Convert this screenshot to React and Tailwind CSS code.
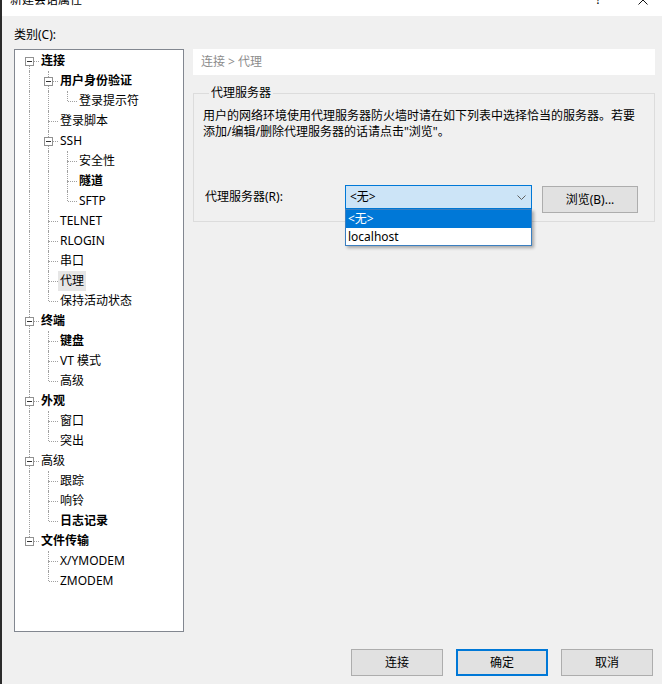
import React from "react";

const tree = [
  {
    t: "连接", b: true, c: [
      { t: "用户身份验证", b: true, c: [{ t: "登录提示符" }] },
      { t: "登录脚本" },
      { t: "SSH", c: [{ t: "安全性" }, { t: "隧道", b: true }, { t: "SFTP" }] },
      { t: "TELNET" },
      { t: "RLOGIN" },
      { t: "串口" },
      { t: "代理", sel: true },
      { t: "保持活动状态" },
    ],
  },
  { t: "终端", b: true, c: [{ t: "键盘", b: true }, { t: "VT 模式" }, { t: "高级" }] },
  { t: "外观", b: true, c: [{ t: "窗口" }, { t: "突出" }] },
  { t: "高级", c: [{ t: "跟踪" }, { t: "响铃" }, { t: "日志记录", b: true }] },
  { t: "文件传输", b: true, c: [{ t: "X/YMODEM" }, { t: "ZMODEM" }] },
];

function flatten(nodes, level, guides, out) {
  nodes.forEach((n, i) => {
    const last = i === nodes.length - 1;
    out.push({ ...n, level, guides, last, first: level === 0 && i === 0 });
    if (n.c) flatten(n.c, level + 1, [...guides, !last], out);
  });
  return out;
}

const rows = flatten(tree, 0, [], []);

function Row({ r }) {
  return (
    <div className="flex h-[20px] items-center pl-[5px]">
      {r.guides.map((g, i) => (
        <div key={i} className="relative h-full w-[19px] shrink-0">
          {g && <div className="absolute left-[9px] top-0 bottom-0 border-l border-dotted border-[#a0a0a0]" />}
        </div>
      ))}
      <div className="relative h-full w-[19px] shrink-0">
        {!r.first && <div className="absolute left-[9px] top-0 h-[10px] border-l border-dotted border-[#a0a0a0]" />}
        {!r.last && <div className="absolute left-[9px] top-[10px] bottom-0 border-l border-dotted border-[#a0a0a0]" />}
        <div className="absolute left-[10px] right-0 top-[10px] border-t border-dotted border-[#a0a0a0]" />
        {r.c && (
          <div className="absolute left-[5px] top-[6px] flex h-[9px] w-[9px] items-center justify-center border border-[#919191] bg-white">
            <div className="h-px w-[5px] bg-[#333]" />
          </div>
        )}
      </div>
      <span className={`px-[2px] leading-[20px] whitespace-nowrap ${r.b ? "font-bold" : ""} ${r.sel ? "bg-[#e6e6e6]" : ""}`}>
        {r.t}
      </span>
    </div>
  );
}

function Button({ children, primary }) {
  return (
    <div
      className={`flex h-[27px] w-[92px] items-center justify-center bg-[#e1e1e1] ${
        primary ? "border-2 border-[#0078d7]" : "border border-[#adadad]"
      }`}
    >
      {children}
    </div>
  );
}

export default function App() {
  return (
    <div className="flex h-[684px] w-[662px] flex-col overflow-hidden border-l-2 border-[#2b2b2b] bg-[#f0f0f0] font-['Noto_Sans','Noto_Sans_CJK_SC',sans-serif] text-[12px] text-black">
      <div className="flex h-[16px] shrink-0 items-start overflow-hidden bg-white">
        <span className="-mt-[8px] ml-[8px] leading-[16px]">新建会话属性</span>
        <div className="flex-1" />
        <span className="-mt-[8px] leading-[16px]">?</span>
        <svg width="10" height="10" viewBox="0 0 10 10" className="-mt-[5px] ml-[37px] mr-[14px]">
          <path d="M0.5 0.5L9.5 9.5M9.5 0.5L0.5 9.5" stroke="#111" strokeWidth="1" />
        </svg>
      </div>

      <div className="h-[33px] shrink-0 pl-[12px] pt-[10px] leading-[18px]">类别(C):</div>

      <div className="flex h-[583px] shrink-0 gap-[9px] pl-[12px]">
        <div className="h-[583px] w-[170px] shrink-0 border border-[#828790] bg-white pt-[1px]">
          {rows.map((r, i) => (
            <Row key={i} r={r} />
          ))}
        </div>

        <div className="w-[462px] shrink-0">
          <div className="flex h-[26px] items-center bg-white pl-[8px] text-[#8c8c8c]">连接 &gt; 代理</div>

          <fieldset className="mt-[10px] h-[137px] border border-[#dcdcdc] px-0 pb-0 pl-[9px]">
            <legend className="ml-[6px] px-[2px] leading-[16px]">代理服务器</legend>
            <div className="pt-[7px] leading-[16px] whitespace-nowrap">
              用户的网络环境使用代理服务器防火墙时请在如下列表中选择恰当的服务器。若要
              <br />
              添加/编辑/删除代理服务器的话请点击"浏览"。
            </div>
            <div className="mt-[45px] flex items-start">
              <div className="ml-[2px] flex h-[24px] w-[140px] items-center">代理服务器(R):</div>
              <div className="relative h-[24px] w-[187px]">
                <div className="flex h-full items-center justify-between border border-[#0078d7] bg-[#cce4f7] pl-[4px] pr-[5px]">
                  <span>&lt;无&gt;</span>
                  <svg width="9" height="5" viewBox="0 0 9 5">
                    <path d="M0.5 0.5L4.5 4.5L8.5 0.5" stroke="#606060" fill="none" />
                  </svg>
                </div>
                <div className="absolute left-0 top-full z-10 w-full border border-[#3b7fc0] bg-white shadow-[2px_2px_3px_rgba(0,0,0,0.3)]">
                  <div className="flex h-[18px] items-center bg-[#0078d7] pl-[2px] text-white">&lt;无&gt;</div>
                  <div className="flex h-[17px] items-center pl-[2px]">localhost</div>
                </div>
              </div>
              <div className="ml-[10px] mt-[1px] flex h-[27px] w-[96px] items-center justify-center border border-[#adadad] bg-[#e1e1e1]">
                浏览(B)...
              </div>
            </div>
          </fieldset>
        </div>
      </div>

      <div className="mt-[17px] flex justify-end gap-[13px] pr-[9px]">
        <Button>连接</Button>
        <Button primary>确定</Button>
        <Button>取消</Button>
      </div>
    </div>
  );
}
